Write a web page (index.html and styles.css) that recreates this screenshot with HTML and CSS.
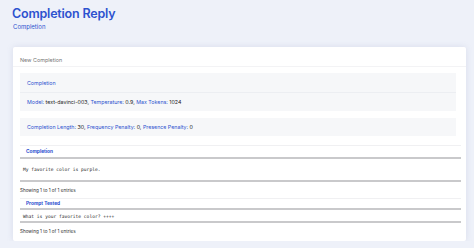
FILE: index.html
```html
<!DOCTYPE html>
<html lang="en">

<head>
    <meta charset="UTF-8">
    <meta name="viewport" content="width=device-width, initial-scale=1.0">
    <title>Completion Reply</title>
    <link rel="stylesheet" href="styles.css">
</head>

<body>

    <!-- Page header -->
    <div class="page-header">
        <h1>Completion Reply</h1>
        <div class="crumb">Completion</div>
    </div>

    <div class="card">
        <div class="card-title">New Completion</div>

        <!-- Settings -->
        <div class="info-box">
            <div class="info-row info-head">Completion</div>
            <div class="info-row">
                <span class="key">Model:</span> text-davinci-003, <span class="key">Temperature:</span> 0.9,
                <span class="key">Max Tokens:</span> 1024
            </div>
        </div>

        <div class="info-box">
            <div class="info-row">
                <span class="key">Completion Length:</span> 30, <span class="key">Frequency Penalty:</span> 0,
                <span class="key">Presence Penalty:</span> 0
            </div>
        </div>

        <!-- Results -->
        <div class="data-table first">
            <div class="table-head">Completion</div>
            <div class="table-cell tall">My favorite color is purple.</div>
        </div>
        <div class="table-info">Showing 1 to 1 of 1 entries</div>

        <div class="data-table">
            <div class="table-head short">Prompt Tested</div>
            <div class="table-cell">What is your favorite color? ++++</div>
        </div>
        <div class="table-info">Showing 1 to 1 of 1 entries</div>
    </div>

</body>

</html>
```

FILE: styles.css
```css
body {
    margin: 0;
    background-color: #eef1f9;
    font-family: Inter, "Noto Sans", sans-serif;
    color: #222;
}

.page-header {
    padding: 5px 0 0 12px;
}

h1 {
    margin: 0;
    font-size: 12.5px;
    font-weight: 600;
    line-height: 18px;
    color: #2d52cf;
    letter-spacing: -0.2px;
}

.crumb {
    font-size: 6px;
    line-height: 8px;
    color: #2d52cf;
    padding-left: 1px;
}

.card {
    margin: 16px 8px 0 13px;
    height: 194px;
    box-sizing: border-box;
    background: #fff;
    border-radius: 2px;
    box-shadow: 0 0 6px rgba(120, 135, 180, 0.18);
    padding: 0 5px 0 7px;
}

.card-title {
    height: 19px;
    line-height: 26px;
    font-size: 5.4px;
    color: #777;
    border-bottom: 1px solid #f3f3f5;
    margin: 0 -5px 0 -7px;
    padding-left: 7px;
}

.info-box {
    background: #f6f7f9;
    margin: 6px 5px 0 0;
    font-size: 5.3px;
}

.info-box + .info-box {
    margin-top: 7px;
}

.info-row {
    height: 18px;
    line-height: 18px;
    padding-left: 7px;
    color: #222;
}

.info-head {
    height: 19px;
    line-height: 21px;
    color: #2d52cf;
    border-bottom: 1px solid #eceef2;
}

.key {
    color: #2d52cf;
}

.data-table {
    margin-top: 1px;
    border-top: 1px solid #f0f0f2;
}

.data-table.first {
    margin-top: 9px;
}

.table-head {
    font-size: 4.8px;
    font-weight: 700;
    color: #2d52cf;
    height: 11px;
    line-height: 11px;
    padding-left: 6px;
    border-bottom: 2px solid #c9c9cb;
}

.table-head.short {
    height: 9px;
    line-height: 9px;
}

.table-cell {
    font-family: "DejaVu Sans Mono", "Liberation Mono", monospace;
    font-size: 4.6px;
    height: 11px;
    line-height: 13px;
    padding-left: 3px;
    border-bottom: 2px solid #c9c9cb;
    color: #222;
}

.table-cell.tall {
    height: 21px;
    line-height: 22px;
}

.table-info {
    font-size: 4.6px;
    color: #333;
    height: 15px;
    line-height: 17px;
}
```
